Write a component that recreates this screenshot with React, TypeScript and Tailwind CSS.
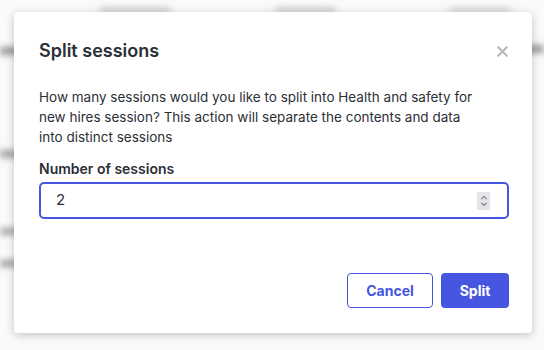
import { X } from "lucide-react";

export default function App() {
  return (
    <div className="relative h-[350px] w-[544px] overflow-hidden bg-[#fafafa] font-['Inter',sans-serif]">
      {/* blurred page behind the dialog */}
      <div className="absolute inset-0 blur-[3px]" aria-hidden="true">
        <div className="absolute left-0 top-[47px] h-[8px] w-[60px] bg-[#9a9a9a]" />
        <div className="absolute left-0 top-[150px] h-[8px] w-[40px] bg-[#a5a5a5]" />
        <div className="absolute left-0 top-[228px] h-[7px] w-[40px] bg-[#a8a8a8]" />
        <div className="absolute left-0 top-[260px] h-[7px] w-[40px] bg-[#a0a0a0]" />
        <div className="absolute right-0 top-[45px] h-[8px] w-[40px] bg-[#9a9a9a]" />
        <div className="absolute left-[100px] top-[8px] h-[4px] w-[70px] bg-[#bcbcbc]" />
        <div className="absolute left-[275px] top-[8px] h-[4px] w-[60px] bg-[#bcbcbc]" />
        <div className="absolute left-[450px] top-[8px] h-[4px] w-[60px] bg-[#c4c4c4]" />
      </div>

      <div className="relative pl-[14px] pt-[12px]">
        <div className="flex h-[321px] w-[518px] flex-col rounded-[4px] bg-white pl-[25px] pr-[23px] shadow-[0_2px_10px_rgba(0,0,0,0.22)]">
          <div className="flex items-center justify-between pt-[27px]">
            <h2 className="text-[18px] font-semibold leading-[24px] text-[#2b2f36]">Split sessions</h2>
            <X size={17} strokeWidth={3} className="mr-[-2px] text-[#b8b8bb]" />
          </div>

          <p className="mt-[24px] w-[445px] text-[13.5px] leading-[20px] text-[#2b2f36]">
            How many sessions would you like to split into Health and safety for new hires session? This action will separate the contents and data into distinct sessions
          </p>

          <label className="mt-[12px] text-[14px] font-semibold leading-[20px] text-[#2b2f36]">Number of sessions</label>
          <div className="mt-[3px] flex h-[37px] items-center justify-between rounded-[5px] border-2 border-[#4656e0] pl-[15px] pr-[17px]">
            <span className="text-[15px] text-[#2b2f36]">2</span>
            <div className="flex h-[18px] w-[13px] flex-col items-center justify-center bg-[#e4e4e9]">
              <svg width="8" height="14" viewBox="0 0 8 14" fill="none" aria-hidden="true">
                <path d="M1.5 5L4 2.5L6.5 5" stroke="#8a8a92" strokeWidth="1.1" strokeLinecap="round" strokeLinejoin="round" />
                <path d="M1.5 9L4 11.5L6.5 9" stroke="#8a8a92" strokeWidth="1.1" strokeLinecap="round" strokeLinejoin="round" />
              </svg>
            </div>
          </div>

          <div className="mt-auto flex justify-end gap-[8px] pb-[25px]">
            <button className="h-[35px] w-[86px] rounded-[4px] border border-[#4656e0] bg-white text-[14px] font-bold text-[#4656e0]">
              Cancel
            </button>
            <button className="h-[35px] w-[68px] rounded-[4px] bg-[#4656e0] text-[14px] font-bold text-white">
              Split
            </button>
          </div>
        </div>
      </div>
    </div>
  );
}
